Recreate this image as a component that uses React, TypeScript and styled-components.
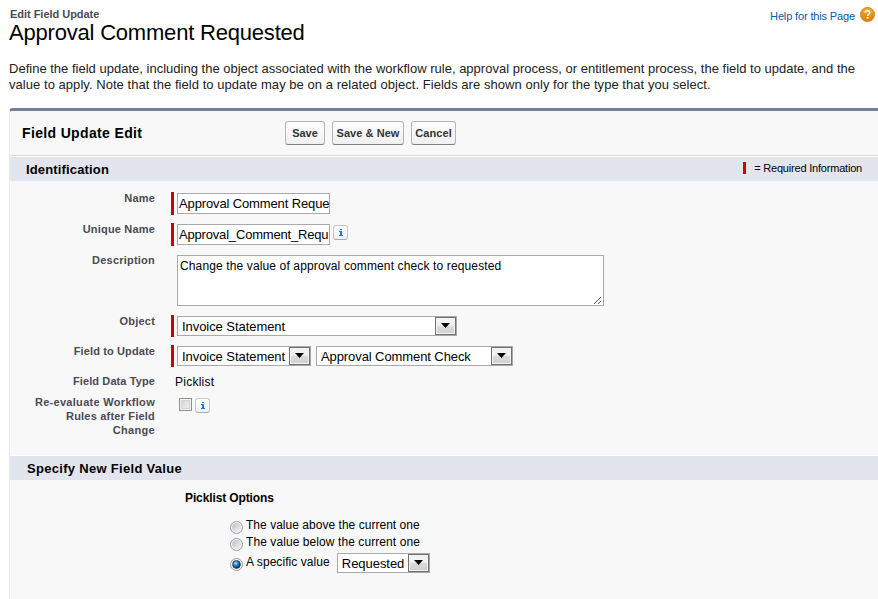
import React from "react";
import styled, { createGlobalStyle } from "styled-components";

const GlobalStyle = createGlobalStyle`
  * { box-sizing: border-box; }
  body {
    margin: 0;
    height: 599px;
    overflow: hidden;
    background: #fff;
    color: #000;
    font-family: "Liberation Sans", Arial, sans-serif;
    font-size: 12px;
  }
`;

const Page = styled.div`
  width: 878px;
  height: 599px;
  display: flex;
  flex-direction: column;
  overflow: hidden;
`;

const Text = styled.span<{ $ls?: number }>`
  white-space: nowrap;
  letter-spacing: ${(p) => p.$ls ?? 0}px;
`;

const PageHeader = styled.header`
  display: flex;
  justify-content: space-between;
  height: 61px;
  padding: 7px 3px 0 9px;
`;

const Eyebrow = styled.div`
  padding-left: 1px;
  font-size: 11px;
  font-weight: bold;
  line-height: 14px;
  color: #4a4a56;
`;

const Title = styled.h1`
  margin: -1px 0 0;
  font-size: 22px;
  font-weight: normal;
  line-height: 25px;
`;

const HelpLink = styled.a`
  display: flex;
  align-items: flex-start;
  gap: 5px;
  height: 16px;
  font-size: 11px;
  line-height: 18px;
  color: #015ba7;
`;

const Intro = styled.p`
  margin: 0;
  height: 47px;
  padding-left: 9px;
  font-size: 13px;
  line-height: 16px;
  color: #222;
  display: flex;
  flex-direction: column;
`;

const Panel = styled.main`
  flex: 1;
  margin-left: 9px;
  border-left: 1px solid #eaeaea;
  border-top: 3px solid #747e96;
  border-top-left-radius: 4px;
  background: #f8f8f8;
`;

const PanelHeader = styled.div`
  display: flex;
  align-items: center;
  height: 45px;
  padding-left: 12px;
  border-bottom: 1px solid #dbdbdb;
`;

const PanelTitle = styled.h2`
  width: 263px;
  margin: 0;
  font-size: 14px;
  line-height: 18px;
`;

const Buttons = styled.div`
  display: flex;
  gap: 7px;
`;

const Button = styled.button<{ $w: number }>`
  width: ${(p) => p.$w}px;
  height: 24px;
  padding: 0;
  border: 1px solid #b5b5b5;
  border-bottom-color: #7f7f7f;
  border-radius: 3px;
  background: linear-gradient(#fff, #f0f0f0);
  color: #333;
  font: bold 11px "Liberation Sans", Arial, sans-serif;
  display: flex;
  align-items: center;
  justify-content: center;
`;

const Band = styled.div<{ $indent: number }>`
  display: flex;
  align-items: center;
  justify-content: space-between;
  height: 25px;
  padding: 0 16px 0 ${(p) => p.$indent}px;
  border-top: 1px solid #fff;
  background: #e2e5ee;
`;

const BandTitle = styled.h3`
  margin: 2px 0 0;
  font-size: 13px;
  line-height: 16px;
`;

const Legend = styled.div`
  display: flex;
  align-items: center;
  gap: 8px;
  font-size: 11px;
  margin-top: -2px;
`;

const LegendMark = styled.i`
  width: 3px;
  height: 12px;
  background: #c00;
`;

const Fields = styled.div`
  height: 274px;
  padding-top: 10px;
`;

const Row = styled.div<{ $h: number }>`
  display: grid;
  grid-template-columns: 145px 1fr;
  column-gap: 16px;
  height: ${(p) => p.$h}px;
`;

const Label = styled.label`
  display: flex;
  flex-direction: column;
  align-items: flex-end;
  font-size: 11px;
  font-weight: bold;
  line-height: 14px;
  color: #4a4a56;
`;

const Value = styled.div<{ $top?: number; $left?: number }>`
  display: flex;
  align-items: flex-start;
  padding-top: ${(p) => p.$top ?? 1}px;
  padding-left: ${(p) => p.$left ?? 0}px;
`;

const RequiredMark = styled.i<{ $h: number }>`
  width: 3px;
  height: ${(p) => p.$h}px;
  margin-right: 3px;
  background: #c00;
`;

const Input = styled.div`
  width: 153px;
  height: 21px;
  margin-top: 1px;
  padding-left: 1px;
  border: 1px solid #a9a9ad;
  background: #fff;
  font-size: 13px;
  line-height: 19px;
  overflow: hidden;
`;

const TextArea = styled.div`
  display: flex;
  justify-content: space-between;
  width: 427px;
  height: 51px;
  padding: 3px 1px 0 2px;
  border: 1px solid #a9a9ad;
  background: #fff;
  line-height: 15px;
`;

const Grip = styled.svg`
  align-self: flex-end;
  margin-bottom: 1px;
`;

const SelectBox = styled.div<{ $w: number }>`
  display: flex;
  justify-content: space-between;
  width: ${(p) => p.$w}px;
  height: 20px;
  margin-top: 1px;
  padding-left: 4px;
  border: 1px solid #a9a9ad;
  background: #fff;
  font-size: 13px;
  line-height: 19px;
`;

const SelectArrow = styled.span`
  display: flex;
  align-items: center;
  justify-content: center;
  flex: none;
  width: 21px;
  height: 18px;
  padding-bottom: 1px;
  border: 1px solid #707070;
  box-shadow: inset 0 0 0 1px #f4f4f4;
  background: linear-gradient(#f2f2f2 0 45%, #dcdcdc 50%, #cfcfcf);
`;

const SelectGroup = styled.div<{ $gap: number }>`
  display: flex;
  gap: ${(p) => p.$gap}px;
`;

const InfoBadge = styled.span`
  display: flex;
  align-items: center;
  justify-content: center;
  width: 15px;
  height: 15px;
  border: 1px solid #c6c6cc;
  border-bottom-color: #a9a9b0;
  border-radius: 3px;
  background: linear-gradient(#fff, #eef0f4);
`;

const CheckBox = styled.span`
  width: 13px;
  height: 13px;
  margin-right: 3px;
  border: 1px solid #8e8f8f;
  box-shadow: inset 0 0 0 1px #f4f4f4, inset 0 0 0 2px #d3d5d9;
  background: linear-gradient(135deg, #cbcfd5, #f6f6f6);
`;

const Options = styled.div`
  padding: 10px 0 0 175px;
`;

const OptionsTitle = styled.h4`
  margin: 0 0 12px;
  font-size: 12px;
  line-height: 16px;
`;

const Option = styled.div<{ $h: number; $top?: number }>`
  display: flex;
  align-items: flex-start;
  height: ${(p) => p.$h}px;
  padding: ${(p) => p.$top ?? 0}px 0 0 45px;
`;

const RadioMark = styled.svg`
  flex: none;
  margin-top: 3px;
`;

const OptionText = styled.span`
  display: flex;
  margin: 0 7px 0 3px;
  line-height: 14px;
`;

const OptionSelect = styled.div`
  margin-top: -3px;
`;

const InfoIcon = () => (
  <InfoBadge>
    <svg width="5" height="7" viewBox="0 0 5 7" shapeRendering="crispEdges">
      <path d="M2 0h2v1h-2zM1 2h3v4h1v1h-4v-1h1v-3h-1z" fill="#1a7bdc" />
    </svg>
  </InfoBadge>
);

const Select = ({ width, ls, children }: { width: number; ls: number; children: string }) => (
  <SelectBox $w={width}>
    <Text $ls={ls}>{children}</Text>
    <SelectArrow>
      <svg width="9" height="5" viewBox="0 0 9 5">
        <path d="M0 0h9L4.5 5z" fill="#000" />
      </svg>
    </SelectArrow>
  </SelectBox>
);

const Radio = ({ checked = false }: { checked?: boolean }) => (
  <RadioMark width="13" height="13" viewBox="0 0 13 13">
    <defs>
      <linearGradient id="well" x1="0" y1="0" x2="1" y2="1">
        <stop offset="0" stopColor="#b9bdc3" />
        <stop offset="1" stopColor="#f6f6f6" />
      </linearGradient>
      <radialGradient id="dot" cx=".4" cy=".35" r=".65">
        <stop offset="0" stopColor="#b4ecff" />
        <stop offset=".45" stopColor="#2585b5" />
        <stop offset="1" stopColor="#0b2c47" />
      </radialGradient>
    </defs>
    <circle cx="6.5" cy="6.5" r="6" fill="#f4f4f4" stroke="#9a9b9b" />
    <circle cx="6.5" cy="6.5" r="4.5" fill="url(#well)" />
    {checked && <circle cx="6.5" cy="6.5" r="3.9" fill="url(#dot)" stroke="#16344c" strokeWidth=".6" />}
  </RadioMark>
);

const HelpIcon = () => (
  <svg width="15" height="15" viewBox="0 0 15 15">
    <defs>
      <linearGradient id="help" x1="0" y1="0" x2="0" y2="1">
        <stop offset="0" stopColor="#f7ac35" />
        <stop offset="1" stopColor="#e07c00" />
      </linearGradient>
    </defs>
    <circle cx="7.5" cy="7.5" r="7" fill="url(#help)" stroke="#b87b28" strokeWidth=".9" />
    <path d="M5.2 5.7C5.3 3.2 9.8 3.2 9.8 5.6C9.8 7.1 7.6 7.2 7.6 9" fill="none" stroke="#fff" strokeWidth="1.6" />
    <rect x="6.7" y="10" width="1.8" height="1.7" fill="#fff" />
  </svg>
);

export default function App() {
  return (
    <>
      <GlobalStyle />
      <Page>
        <PageHeader>
          <div>
            <Eyebrow><Text $ls={-0.03}>Edit Field Update</Text></Eyebrow>
            <Title><Text $ls={-0.2}>Approval Comment Requested</Text></Title>
          </div>
          <HelpLink>
            <Text $ls={-0.14}>Help for this Page</Text>
            <HelpIcon />
          </HelpLink>
        </PageHeader>
        <Intro>
          <Text $ls={0.008}>Define the field update, including the object associated with the workflow rule, approval process, or entitlement process, the field to update, and the</Text>
          <Text $ls={0.047}>value to apply. Note that the field to update may be on a related object. Fields are shown only for the type that you select.</Text>
        </Intro>
        <Panel>
          <PanelHeader>
            <PanelTitle><Text $ls={0.35}>Field Update Edit</Text></PanelTitle>
            <Buttons>
              <Button $w={40}><Text>Save</Text></Button>
              <Button $w={72}><Text $ls={0.05}>Save &amp; New</Text></Button>
              <Button $w={45}><Text $ls={0.1}>Cancel</Text></Button>
            </Buttons>
          </PanelHeader>
          <Band $indent={16}>
            <BandTitle><Text $ls={0.15}>Identification</Text></BandTitle>
            <Legend>
              <LegendMark />
              <Text $ls={-0.2}>= Required Information</Text>
            </Legend>
          </Band>
          <Fields>
            <Row $h={31}>
              <Label><Text $ls={0.2}>Name</Text></Label>
              <Value>
                <RequiredMark $h={23} />
                <Input><Text $ls={-0.13}>Approval Comment Reque</Text></Input>
              </Value>
            </Row>
            <Row $h={31}>
              <Label><Text $ls={0.18}>Unique Name</Text></Label>
              <Value>
                <RequiredMark $h={23} />
                <SelectGroup $gap={3}>
                  <Input><Text $ls={-0.18}>Approval_Comment_Requ</Text></Input>
                  <Value $top={2}><InfoIcon /></Value>
                </SelectGroup>
              </Value>
            </Row>
            <Row $h={61}>
              <Label><Text $ls={0.22}>Description</Text></Label>
              <Value $top={2} $left={6}>
                <TextArea>
                  <Text $ls={0.13}>Change the value of approval comment check to requested</Text>
                  <Grip width="8" height="8" viewBox="0 0 8 8" shapeRendering="crispEdges">
                    <path d="M0 7h1v1h-1zM1 6h1v1h-1zM2 5h1v1h-1zM3 4h1v1h-1zM4 3h1v1h-1zM5 2h1v1h-1zM6 1h1v1h-1zM4 7h1v1h-1zM5 6h1v1h-1zM6 5h1v1h-1z" fill="#555" />
                  </Grip>
                </TextArea>
              </Value>
            </Row>
            <Row $h={30}>
              <Label><Text $ls={0.2}>Object</Text></Label>
              <Value>
                <RequiredMark $h={22} />
                <Select width={280} ls={-0.06}>Invoice Statement</Select>
              </Value>
            </Row>
            <Row $h={30}>
              <Label><Text $ls={0.12}>Field to Update</Text></Label>
              <Value>
                <RequiredMark $h={22} />
                <SelectGroup $gap={5}>
                  <Select width={134} ls={-0.06}>Invoice Statement</Select>
                  <Select width={197} ls={-0.09}>Approval Comment Check</Select>
                </SelectGroup>
              </Value>
            </Row>
            <Row $h={21}>
              <Label><Text $ls={0.1}>Field Data Type</Text></Label>
              <Value $top={1} $left={4}><Text $ls={0.25}>Picklist</Text></Value>
            </Row>
            <Row $h={50}>
              <Label>
                <Text $ls={0.3}>Re-evaluate Workflow</Text>
                <Text $ls={0.2}>Rules after Field</Text>
                <Text $ls={0.3}>Change</Text>
              </Label>
              <Value $top={3} $left={8}>
                <CheckBox />
                <InfoIcon />
              </Value>
            </Row>
          </Fields>
          <Band $indent={17}>
            <BandTitle><Text $ls={0.3}>Specify New Field Value</Text></BandTitle>
          </Band>
          <Options>
            <OptionsTitle><Text $ls={-0.12}>Picklist Options</Text></OptionsTitle>
            <Option $h={17}><Radio /><OptionText><Text $ls={0.03}>The value above the current one</Text></OptionText></Option>
            <Option $h={17}><Radio /><OptionText><Text $ls={0.08}>The value below the current one</Text></OptionText></Option>
            <Option $h={25} $top={3}>
              <Radio checked />
              <OptionText><Text $ls={0.07}>A specific value</Text></OptionText>
              <OptionSelect><Select width={93} ls={-0.05}>Requested</Select></OptionSelect>
            </Option>
          </Options>
        </Panel>
      </Page>
    </>
  );
}
